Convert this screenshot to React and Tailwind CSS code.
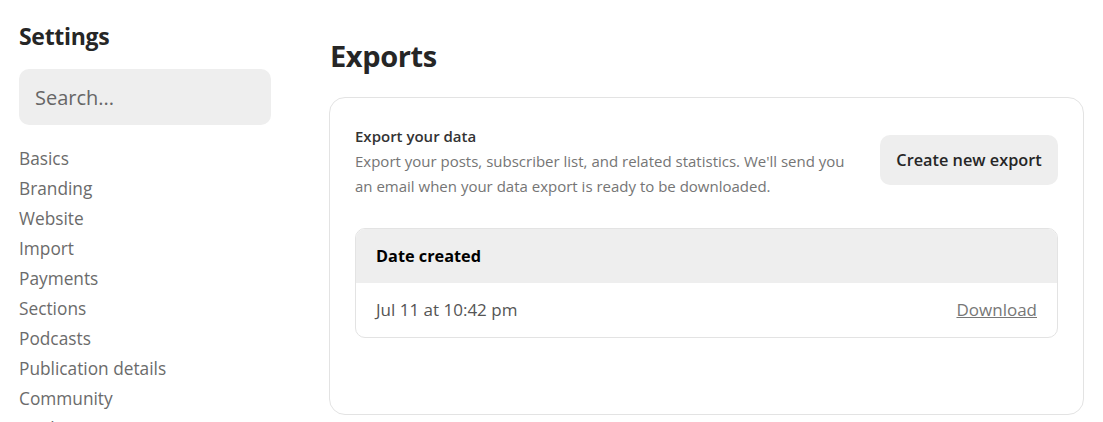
import React from 'react';

const navItems = [
  'Basics',
  'Branding',
  'Website',
  'Import',
  'Payments',
  'Sections',
  'Podcasts',
  'Publication details',
  'Community',
  'Analytics',
];

function Sidebar() {
  return (
    <aside className="w-[252px] shrink-0 pt-[20px]">
      <h1 className="text-[23px] leading-[32px] font-bold tracking-[-0.3px] text-[#262626]">Settings</h1>
      <input
        type="text"
        placeholder="Search..."
        className="mt-[17px] w-full h-[56px] rounded-[10px] bg-[#eeeeee] px-[16px] text-[20px] text-[#444] placeholder:text-[#666] outline-none"
      />
      <nav className="mt-[19px] flex flex-col">
        {navItems.map((item) => (
          <a key={item} href="#" className="text-[17.3px] leading-[30px] text-[#6b6b6b]">
            {item}
          </a>
        ))}
      </nav>
    </aside>
  );
}

function App() {
  return (
    <div
      className="h-[422px] overflow-hidden bg-white flex pl-[19px] gap-[58px]"
      style={{ fontFamily: '"Open Sans", "Noto Sans", sans-serif' }}
    >
      <Sidebar />
      <main className="w-[755px] pt-[35px]">
        <h2 className="ml-px text-[29px] leading-[42px] font-bold tracking-[-0.4px] text-[#262626]">Exports</h2>
        <section className="mt-[20px] h-[318px] border border-[#e3e3e3] rounded-[16px] px-[25px] pt-[28px]">
          <div className="flex items-start justify-between gap-4">
            <div className="min-w-0">
              <h3 className="text-[15px] leading-[20px] font-semibold text-[#333]">Export your data</h3>
              <p className="mt-[3px] max-w-[500px] text-[15px] leading-[25px] text-[#757575]">
                Export your posts, subscriber list, and related statistics. We'll send you an email when your data
                export is ready to be downloaded.
              </p>
            </div>
            <button className="mt-[9px] h-[50px] w-[178px] shrink-0 rounded-[10px] bg-[#eeeeee] text-[16.3px] font-semibold text-[#262626] whitespace-nowrap">
              Create new export
            </button>
          </div>
          <div className="mt-[29px] border border-[#e3e3e3] rounded-[10px] overflow-hidden">
            <div className="h-[54px] bg-[#eeeeee] flex items-center px-[20px] text-[16.3px] font-bold text-black">
              Date created
            </div>
            <div className="h-[54px] flex items-center justify-between px-[20px] text-[17px]">
              <span className="text-[#555]">Jul 11 at 10:42 pm</span>
              <a href="#" className="text-[#777] underline">Download</a>
            </div>
          </div>
        </section>
      </main>
    </div>
  );
}

export default App;
